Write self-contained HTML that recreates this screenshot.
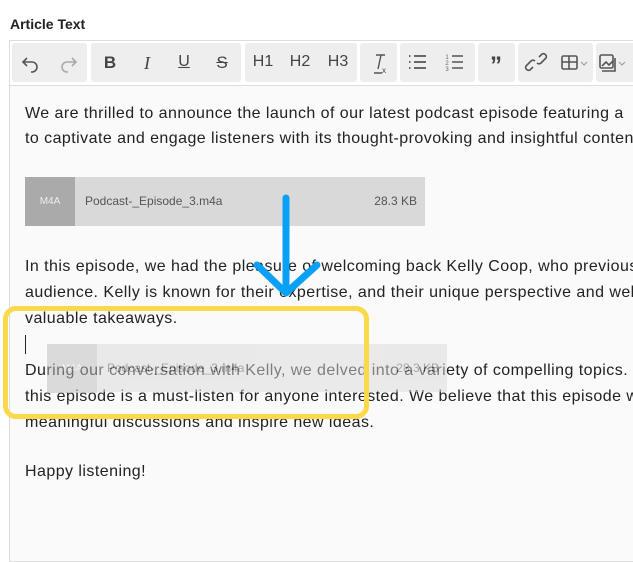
<!DOCTYPE html>
<html><head><style>
body{margin:0;width:633px;height:551px;overflow:hidden;background:#fff;font-family:"Liberation Sans",sans-serif;position:relative}
.lbl{position:absolute;left:10px;top:16px;font-size:14px;font-weight:bold;color:#222}
.ed{position:absolute;left:9px;top:40px;width:640px;height:520px;border:1px solid #ddd;background:#fafafa}
.tb{position:absolute;left:9px;top:40px;width:640px;height:44px;background:#fff;border:1px solid #ddd}
.g{position:absolute;top:43px;height:39px;background:#eee;border-radius:3px}
.i{position:absolute;top:53px;font-size:16px;color:#444;transform:translateX(-50%)}
.t{position:absolute;left:25px;font-size:16px;color:#222;white-space:nowrap;letter-spacing:0.45px}
.att{position:absolute;left:25px;top:177px;width:400px;height:49px;background:#d9d9d9}
.att .m{position:absolute;left:0;top:0;width:50px;height:49px;background:#aaa;color:#eee;font-size:10px;line-height:49px;text-align:center}
.att .n{position:absolute;left:60px;top:17px;font-size:12px;color:#555}
.att .s{position:absolute;right:8px;top:17px;font-size:12px;color:#555}
</style></head><body>
<div class="lbl">Article Text</div>
<div class="ed"></div>
<div class="tb"></div>
<div class="g" style="left:12px;width:75px"></div>
<div class="g" style="left:91px;width:150px"></div>
<div class="g" style="left:245px;width:112px"></div>
<div class="g" style="left:360px;width:37px"></div>
<div class="g" style="left:400px;width:75px"></div>
<div class="g" style="left:478px;width:37px"></div>
<div class="g" style="left:518px;width:75px"></div>
<div class="g" style="left:596px;width:50px"></div>
<svg style="position:absolute;left:0;top:40px" width="633" height="44" fill="none" stroke="#555" stroke-width="1.6">
<path d="M27 18l-4 4 4 4M23 22h9a5 5 0 0 1 0 10h-1"/>
<path d="M72 18l4 4-4 4M76 22h-9a5 5 0 0 0 0 10h1" stroke="#aaa"/>
<path d="M376 15h9M381 15l-3 14M374 33h8" stroke-width="1.4"/>
<path d="M414 16h12M414 22h12M414 28h12M409 16h1.5M409 22h1.5M409 28h1.5" stroke-width="1.8"/>
<path d="M452 16h11M452 22h11M452 28h11"/>
<path d="M533 27l-3 3a3 3 0 0 1-4-4l5-5a3 3 0 0 1 4 0M539 17l3-3a3 3 0 0 1 4 4l-5 5a3 3 0 0 1-4 0"/>
<rect x="562" y="16" width="15" height="13" rx="1.5"/><path d="M562 22h15M569 16v13"/>
<path d="M581 22l3 3 3-3" stroke="#999" stroke-width="1"/>
<rect x="600" y="15" width="13" height="13" rx="1.5"/><path d="M602 31h13v-13M602 26l4-4 3 3 4-4"/>
<path d="M619 22l3 3 3-3" stroke="#999" stroke-width="1"/>
</svg>
<div class="i" style="left:110px;font-weight:bold;font-size:17px">B</div>
<div class="i" style="left:147px;font-style:italic;font-family:'Liberation Serif';font-size:18px">I</div>
<div class="i" style="left:184px;text-decoration:underline">U</div>
<div class="i" style="left:222px;text-decoration:line-through;font-size:17px">S</div>
<div class="i" style="left:263px">H1</div>
<div class="i" style="left:300px">H2</div>
<div class="i" style="left:338px">H3</div>
<div class="i" style="left:384px;font-size:8px;top:66px">x</div>
<div class="i" style="left:447px;font-size:6px;top:55px;line-height:6px;color:#666">1<br>2<br>3</div>
<div class="i" style="left:496px;font-weight:bold;font-size:24px;top:52px">”</div>
<div class="t" style="top:105px">We are thrilled to announce the launch of our latest podcast episode featuring a</div>
<div class="t" style="top:130px">to captivate and engage listeners with its thought-provoking and insightful content.</div>
<div class="att"><div class="m">M4A</div><div class="n">Podcast-_Episode_3.m4a</div><div class="s">28.3 KB</div></div>
<div class="t" style="top:258px">In this episode, we had the pleasure of welcoming back Kelly Coop, who previously</div>
<div class="t" style="top:284px">audience. Kelly is known for their expertise, and their unique perspective and well</div>
<div class="t" style="top:310px">valuable takeaways.</div>
<div style="position:absolute;left:25px;top:335px;width:1px;height:19px;background:#222"></div>
<div class="t" style="top:362px">During our conversation with Kelly, we delved into a variety of compelling topics.</div>
<div class="t" style="top:388px">this episode is a must-listen for anyone interested. We believe that this episode will</div>
<div class="t" style="top:414px">meaningful discussions and inspire new ideas.</div>
<div class="t" style="top:463px">Happy listening!</div>
<div class="att" style="left:47px;top:344px;opacity:0.5;width:400px;height:48px"><div class="m" style="background:#bbb">M4A</div><div class="n">Podcast-_Episode_3.m4a</div><div class="s">28.3 KB</div></div>
<div style="position:absolute;left:3px;top:306px;width:356px;height:103px;border:5px solid #fcd94a;border-radius:13px"></div>
<svg style="position:absolute;left:0;top:0" width="633" height="551" fill="none" stroke="#0aa0f5" stroke-width="7" stroke-linecap="round" stroke-linejoin="round">
<path d="M286 198V290M257 265l29 28 31-28"/>
</svg>
</body></html>
